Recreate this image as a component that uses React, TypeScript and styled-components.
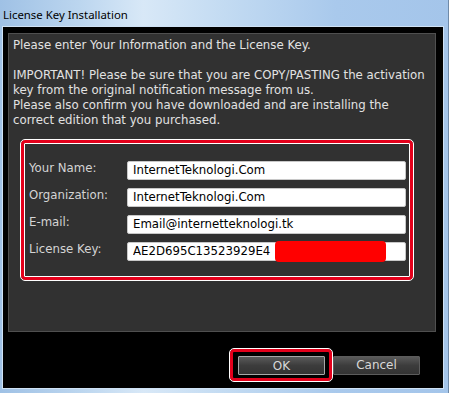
import { createGlobalStyle } from "styled-components";
import styled from "styled-components";

const GlobalStyle = createGlobalStyle`
    html, body {
        margin: 0;
        padding: 0;
        background: #a9c8ea;
    }
    * {
        box-sizing: border-box;
    }
`;

const fields = [
    { label: "Your Name:", value: "InternetTeknologi.Com" },
    { label: "Organization:", value: "InternetTeknologi.Com" },
    { label: "E-mail:", value: "Email@internetteknologi.tk" },
    { label: "License Key:", value: "AE2D695C13523929E4", hidden: true },
];

const App = () => {
    return (
        <>
            <GlobalStyle />
            <Window>
                <TitleBar>License Key Installation</TitleBar>
                <Client>
                    <Panel>
                        <Message>Please enter Your Information and the License Key.</Message>
                        <Message>
                            IMPORTANT! Please be sure that you are COPY/PASTING the activation<br />
                            key from the original notification message from us.<br />
                            Please also confirm you have downloaded and are installing the<br />
                            correct edition that you purchased.
                        </Message>

                        <FieldGroup>
                            {fields.map((f) => (
                                <FieldRow key={f.label}>
                                    <Label>{f.label}</Label>
                                    <InputWrap>
                                        <Input readOnly value={f.value} />
                                        {f.hidden && <Redaction />}
                                    </InputWrap>
                                </FieldRow>
                            ))}
                        </FieldGroup>
                    </Panel>

                    <ButtonRow>
                        <Highlight>
                            <DialogButton $default>OK</DialogButton>
                        </Highlight>
                        <DialogButton>Cancel</DialogButton>
                    </ButtonRow>
                </Client>
            </Window>
        </>
    );
};
export default App;

const Window = styled.div`
    display: flex;
    flex-direction: column;
    width: 449px;
    height: 393px;
    padding: 0 5px 5px 3px;
    background: linear-gradient(90deg, #9fc1e5 0%, #bcd6ef 18%, #d8e8f7 32%, #c3dbf2 50%, #a9c9ec 75%, #a4c5ea 100%);
    border-right: 1px solid #6f8aa8;
    overflow: hidden;
`;

const TitleBar = styled.div`
    height: 27px;
    display: flex;
    align-items: center;
    padding: 1px 0 0 0;
    font-family: "Noto Sans", "Open Sans", sans-serif;
    font-size: 11.4px;
    color: #000;
`;

const Client = styled.div`
    flex: 1;
    display: flex;
    flex-direction: column;
    background: #000;
    padding: 6px 7px 7px 5px;
    box-shadow: 0 0 0 1px #cfe2f5;
`;

const Panel = styled.div`
    flex: 1;
    background: #313131;
    border: 1px solid #4f4f4f;
    padding: 4px 4px 0 4px;
    display: flex;
    flex-direction: column;
`;

const Message = styled.p`
    margin: 0 0 15px 0;
    font-family: "DejaVu Sans", Verdana, sans-serif;
    font-size: 11.75px;
    line-height: 15px;
    color: #e2e2e2;
`;

const FieldGroup = styled.div`
    display: flex;
    flex-direction: column;
    gap: 8px;
    margin: -3px 18px 0 8px;
    padding: 17px 4px 17px 5px;
    border: 3px solid #e4001b;
    border-radius: 4px;
    outline: 1px solid #ffffff;
    box-shadow: inset 0 0 0 1px #ffffff;
`;

const FieldRow = styled.div`
    display: grid;
    grid-template-columns: 98px 1fr;
    align-items: center;
    height: 19px;
`;

const Label = styled.span`
    font-family: "DejaVu Sans", Verdana, sans-serif;
    font-size: 11.75px;
    color: #d4d4d4;
    padding-bottom: 4px;
`;

const InputWrap = styled.div`
    position: relative;
    height: 19px;
`;

const Input = styled.input`
    width: 100%;
    height: 19px;
    margin: 0;
    padding: 0 5px;
    border: 1px solid #c8c8c8;
    border-radius: 2px;
    background: #fff;
    font-family: "DejaVu Sans", Verdana, sans-serif;
    font-size: 11.75px;
    color: #000;
    outline: none;
`;

const Redaction = styled.div`
    position: absolute;
    left: 148px;
    top: 0;
    width: 111px;
    height: 21px;
    background: #ff0000;
    border-radius: 4px;
`;

const ButtonRow = styled.div`
    display: flex;
    justify-content: flex-end;
    align-items: center;
    gap: 1px;
    margin-top: 17px;
    padding-right: 16px;
`;

const Highlight = styled.div`
    display: flex;
    padding: 4px 4px 3px 5px;
    border: 3px solid #e4001b;
    border-radius: 4px;
    outline: 1px solid #ffffff;
`;

const DialogButton = styled.button<{ $default?: boolean }>`
    width: 87px;
    height: 19px;
    margin: 0;
    padding: 0;
    border: 1px solid ${(p) => (p.$default ? "#a8a8a8" : "#5c5c5c")};
    border-radius: 1px;
    background: linear-gradient(#5a5a5a, #3c3c3c 50%, #333333);
    font-family: "DejaVu Sans", Verdana, sans-serif;
    font-size: 12px;
    color: #d8d8d8;
    cursor: default;
`;
